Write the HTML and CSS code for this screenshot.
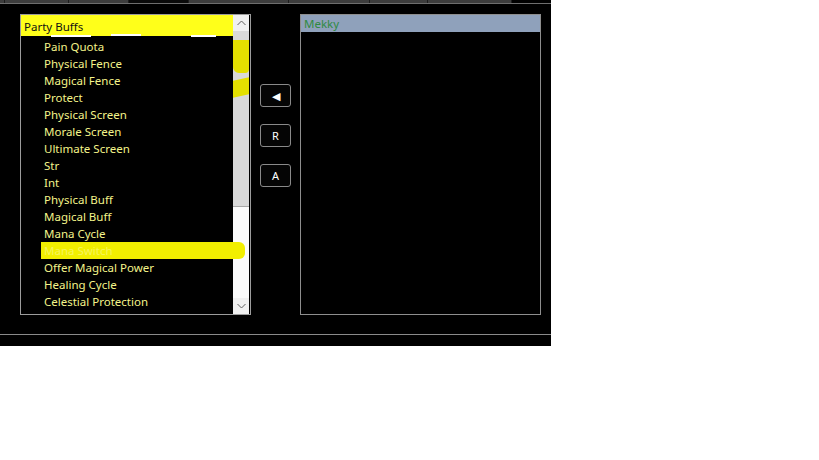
FILE: index.html
```html
<!DOCTYPE html>
<html lang="en">
  <head>
    <meta charset="UTF-8" />
    <title>Buff Setup</title>
    <link rel="stylesheet" href="styles.css">
  </head>
  <body>
    <div class="window">
      <div class="tabs">
        <div class="tab" style="width: 4px"></div>
        <div class="tab" style="width: 63px"></div>
        <div class="tab" style="width: 59px"></div>
        <div class="tab active" style="width: 59px"></div>
        <div class="tab" style="width: 99px"></div>
        <div class="tab" style="width: 80px"></div>
        <div class="tab" style="width: 57px"></div>
        <div class="tab" style="width: 83px"></div>
      </div>

      <div class="content">
        <div class="listbox left">
          <div class="items">
            <div class="header">Party Buffs</div>
            <div class="item">Pain Quota</div>
            <div class="item">Physical Fence</div>
            <div class="item">Magical Fence</div>
            <div class="item">Protect</div>
            <div class="item">Physical Screen</div>
            <div class="item">Morale Screen</div>
            <div class="item">Ultimate Screen</div>
            <div class="item">Str</div>
            <div class="item">Int</div>
            <div class="item">Physical Buff</div>
            <div class="item">Magical Buff</div>
            <div class="item">Mana Cycle</div>
            <div class="item marked">Mana Switch</div>
            <div class="item">Offer Magical Power</div>
            <div class="item">Healing Cycle</div>
            <div class="item">Celestial Protection</div>
          </div>
          <div class="scrollbar">
            <div class="arrow">
              <svg width="9" height="6" viewBox="0 0 9 6"><path d="M0.5 5 L4.5 1 L8.5 5" fill="none" stroke="#606060" stroke-width="1"/></svg>
            </div>
            <div class="thumb"></div>
            <div class="track"></div>
            <div class="arrow">
              <svg width="9" height="6" viewBox="0 0 9 6"><path d="M0.5 1 L4.5 5 L8.5 1" fill="none" stroke="#606060" stroke-width="1"/></svg>
            </div>
          </div>
          <!-- highlighter scribbles drawn over the list -->
          <div class="scribble s1"></div>
          <div class="scribble s2"></div>
          <div class="scribble s3"></div>
          <div class="streak w1"></div>
          <div class="streak w2"></div>
          <div class="streak w3"></div>
        </div>

        <div class="buttons">
          <button class="btn">&#9664;</button>
          <button class="btn">R</button>
          <button class="btn">A</button>
        </div>

        <div class="listbox right">
          <div class="selected">Mekky</div>
        </div>
      </div>

      <div class="footer"></div>
    </div>
  </body>
</html>
```

FILE: styles.css
```css
body {
  margin: 0;
  background: #fff;
  font-family: "Noto Sans", "Open Sans", sans-serif;
}

.window {
  width: 551px;
  height: 346px;
  background: #000;
  display: flex;
  flex-direction: column;
}

.tabs {
  display: flex;
  height: 3px;
  border-bottom: 1px solid #6e6e6e;
}

.tab {
  height: 3px;
  background: #3d3d3d;
  border-right: 1px solid #1c1c1c;
}

.tab.active {
  background: #0a0a0a;
}

.content {
  display: flex;
  padding: 10px 0 0 20px;
}

.listbox {
  position: relative;
  border: 1px solid #9c9c9c;
  box-sizing: border-box;
}

.listbox.left {
  width: 231px;
  height: 301px;
  display: flex;
}

.items {
  width: 212px;
  overflow: hidden;
  font-size: 11.5px;
  color: #f4f48a;
}

.header {
  height: 21px;
  margin-bottom: 2px;
  background: #ffff1a;
  color: #111;
  padding-left: 3px;
  line-height: 23px;
}

.item {
  height: 17px;
  line-height: 17px;
  padding-left: 23px;
  white-space: nowrap;
}

.item.marked {
  position: relative;
  z-index: 1;
  color: #fafaa6;
  opacity: 0.55;
}

.scrollbar {
  width: 16px;
  display: flex;
  flex-direction: column;
  background: #f0f0f0;
}

.arrow {
  height: 16px;
  display: flex;
  align-items: center;
  justify-content: center;
  background: #f0f0f0;
}

.thumb {
  height: 175px;
  background: #d9d9d9;
  border-bottom: 1px solid #a8a8a8;
}

.track {
  flex: 1;
  background: #fbfbfb;
}

.scribble {
  position: absolute;
  background: #e4e000;
}

.s1 {
  left: 212px;
  top: 25px;
  width: 16px;
  height: 33px;
  border-radius: 0 0 4px 6px;
}

.s2 {
  left: 212px;
  top: 64px;
  width: 16px;
  height: 17px;
  transform: skewY(-12deg);
}

.s3 {
  left: 20px;
  top: 227px;
  width: 204px;
  height: 17px;
  background: #f2ef00;
  border-radius: 0 6px 6px 0;
}

.streak {
  position: absolute;
  height: 2px;
  background: #fff;
  top: 20px;
}

.w1 { left: 30px; width: 40px; }
.w2 { left: 90px; width: 30px; top: 19px; }
.w3 { left: 170px; width: 25px; }

.buttons {
  width: 31px;
  margin-left: 9px;
  padding-top: 70px;
  display: flex;
  flex-direction: column;
  gap: 17px;
}

.btn {
  width: 31px;
  height: 23px;
  padding: 0;
  background: #050505;
  border: 1px solid #8a8a8a;
  border-radius: 3px;
  color: #fff;
  font-family: "Noto Sans", sans-serif;
  font-size: 11px;
  line-height: 20px;
}

.listbox.right {
  width: 241px;
  height: 301px;
  margin-left: 9px;
  border-color: #8e8e8e;
}

.selected {
  height: 17px;
  line-height: 17px;
  background: #8fa1bb;
  color: #2f8a42;
  font-size: 11.5px;
  padding-left: 3px;
}

.footer {
  margin-top: 19px;
  height: 1px;
  background: #8a8a8a;
}
```
